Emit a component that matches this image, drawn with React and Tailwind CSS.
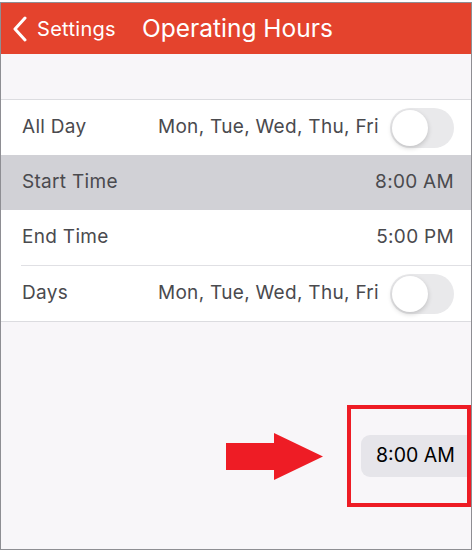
import React from 'react';

function Toggle() {
  return (
    <div className="w-[64px] h-[40px] rounded-full bg-[#e9e9eb] p-[2px] flex items-center">
      <div className="w-[36px] h-[36px] rounded-full bg-white shadow-[0_2px_5px_rgba(0,0,0,0.18)]" />
    </div>
  );
}

function Row({ label, value, toggle, selected, divider }) {
  return (
    <div className={selected ? 'bg-[#d1d1d6]' : 'bg-white'}>
      <div className="flex items-center h-[55px] pl-[21px] pr-[17px]">
        <span className="text-[#4a4a4e]">{label}</span>
        <span className="ml-auto text-[#4a4a4e]">{value}</span>
        {toggle && (
          <div className="ml-[11px]">
            <Toggle />
          </div>
        )}
      </div>
      {divider && <div className="ml-[20px] h-px bg-[#e0e0e4]" />}
    </div>
  );
}

export default function App() {
  return (
    <div className="w-[474px] h-[552px] bg-white pt-[2px]" style={{ fontFamily: 'Inter, "Noto Sans", sans-serif' }}>
      <div className="w-[472px] h-[548px] border border-[#8e8e93] bg-[#f8f6f9] flex flex-col">
        <div className="h-[51px] bg-[#e4432d] flex items-center text-white">
          <svg width="16" height="26" viewBox="0 0 16 26" className="ml-[11px]">
            <path d="M13 2 L3 13 L13 24" fill="none" stroke="white" strokeWidth="3" strokeLinecap="round" strokeLinejoin="round" />
          </svg>
          <span className="ml-[9px] text-[20px] tracking-[0.3px]">Settings</span>
          <span className="ml-[26px] text-[24.5px]">Operating Hours</span>
        </div>
        <div className="h-[45px]" />
        <div className="border-t border-b border-[#dcdce0] text-[19px] tracking-[0.3px]">
          <Row label="All Day" value="Mon, Tue, Wed, Thu, Fri" toggle />
          <Row label="Start Time" value="8:00 AM" selected />
          <Row label="End Time" value="5:00 PM" divider />
          <Row label="Days" value="Mon, Tue, Wed, Thu, Fri" toggle />
        </div>
        <div className="flex items-center mt-[83px]">
          <svg width="97" height="47" viewBox="0 0 97 47" className="ml-[225px]">
            <polygon points="0,10 48,10 48,0 97,23.5 48,47 48,37 0,37" fill="#ee1c25" />
          </svg>
          <div className="ml-[24px] w-[124px] h-[102px] border-[4px] border-[#ee1c25] flex items-center overflow-hidden">
            <div className="ml-[10px] h-[42px] pl-[15px] pr-[20px] rounded-[9px] bg-[#e6e5ea] flex items-center text-[19.5px] text-black whitespace-nowrap">
              8:00 AM
            </div>
          </div>
        </div>
      </div>
    </div>
  );
}
